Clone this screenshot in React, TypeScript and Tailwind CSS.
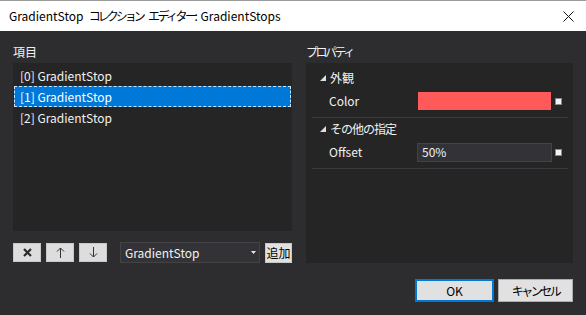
const font = "font-['Noto_Sans_CJK_JP','Noto_Sans',sans-serif]";

function Square() {
  return <div className="ml-[3px] size-[7px] border border-[#8a8a8a] bg-[#f2f2f2]" />;
}

function Category({ label, tight }: { label: string; tight?: boolean }) {
  return (
    <div className="flex h-[22px] items-center">
      <svg className="ml-[8px] size-[6px]" viewBox="0 0 6 6">
        <path d="M6 0 L6 6 L0 6 Z" fill="#e0e0e0" />
      </svg>
      <span className={tight ? "ml-[4px] tracking-[-1px]" : "ml-[4px]"}>{label}</span>
    </div>
  );
}

export default function App() {
  const items = ["[0] GradientStop", "[1] GradientStop", "[2] GradientStop"];
  return (
    <div className={`flex h-[315px] w-[586px] flex-col bg-[#2d2d30] text-[12px] text-[#f1f1f1] ${font}`}>
      <div className="flex h-[31px] items-center border-t border-[#9a9a9a] bg-white pl-[9px] pr-[12px] text-black">
        <span className="flex-1">
          GradientStop&nbsp;&nbsp;
          <span className="tracking-[-3px]">コレクション</span>
          <span className="ml-[5px] tracking-[-2.5px]">エディター</span>: GradientStops
        </span>
        <svg className="size-[11px]" viewBox="0 0 11 11">
          <path d="M0.5 0.5 L10.5 10.5 M10.5 0.5 L0.5 10.5" stroke="#111" strokeWidth="1" />
        </svg>
      </div>

      <div className="flex gap-[14px] px-[13px] pt-[9px]">
        {/* left column */}
        <div className="flex w-[279px] flex-col">
          <div className="flex h-[23px] items-center">項目</div>
          <div className="flex h-[168px] flex-col bg-[#252526] pt-[2px]">
            {items.map((t, i) => (
              <div
                key={t}
                className={
                  i === 1
                    ? "mx-[1px] flex h-[21px] items-center border border-dashed border-[#d0e4f5] bg-[#0078d7] pl-[5px] text-white"
                    : "mx-[1px] flex h-[21px] items-center border border-transparent pl-[5px]"
                }
              >
                {t}
              </div>
            ))}
          </div>
          <div className="mt-[11px] flex h-[21px] items-center">
            <button className="flex h-[19px] w-[28px] items-center justify-center border border-[#c8c8c8] bg-[#dddddd]">
              <svg className="size-[9px]" viewBox="0 0 9 9">
                <path d="M1 1 L8 8 M8 1 L1 8" stroke="#2a2a2a" strokeWidth="2.2" />
              </svg>
            </button>
            <button className="ml-[5px] flex h-[19px] w-[28px] items-center justify-center border border-[#c8c8c8] bg-[#dddddd]">
              <svg className="h-[11px] w-[9px]" viewBox="0 0 9 11">
                <path d="M4.5 1 L4.5 11 M1 4.5 L4.5 1 L8 4.5" stroke="#333" strokeWidth="1" fill="none" />
              </svg>
            </button>
            <button className="ml-[5px] flex h-[19px] w-[28px] items-center justify-center border border-[#c8c8c8] bg-[#dddddd]">
              <svg className="h-[11px] w-[9px]" viewBox="0 0 9 11">
                <path d="M4.5 0 L4.5 10 M1 6.5 L4.5 10 L8 6.5" stroke="#333" strokeWidth="1" fill="none" />
              </svg>
            </button>
            <div className="ml-[13px] flex h-[21px] w-[140px] items-center border border-[#434346] bg-[#333337] pl-[4px] pr-[3px]">
              <span className="flex-1">GradientStop</span>
              <svg className="h-[3px] w-[5px]" viewBox="0 0 5 3">
                <path d="M0 0 L5 0 L2.5 3 Z" fill="#e8e8e8" />
              </svg>
            </div>
            <button className="ml-[5px] flex h-[20px] w-[27px] items-center justify-center border border-[#c8c8c8] bg-[#e1e1e1] text-black">
              追加
            </button>
          </div>
        </div>

        {/* right column */}
        <div className="flex w-[267px] flex-col">
          <div className="flex h-[23px] items-center tracking-[-2.5px]">プロパティ</div>
          <div className="flex h-[200px] flex-col bg-[#252526] pt-[4px]">
            <div className="ml-[6px] mr-[5px] border-b border-[#3a3a3e] pb-[4px]">
              <Category label="外観" />
              <div className="flex h-[24px] items-center">
                <span className="w-[105px] pl-[17px]">Color</span>
                <div className="h-[20px] w-[135px] border border-[#252526] bg-[#ff5a5a]" />
                <Square />
              </div>
            </div>
            <div className="ml-[6px] mr-[5px] border-b border-[#3a3a3e] pb-[4px]">
              <Category label="その他の指定" tight />
              <div className="flex h-[24px] items-center">
                <span className="w-[105px] pl-[17px]">Offset</span>
                <div className="flex h-[19px] w-[135px] items-center border border-[#434346] bg-[#333337] pl-[4px]">
                  50%
                </div>
                <Square />
              </div>
            </div>
          </div>
        </div>
      </div>

      <div className="flex justify-end gap-[4px] px-[13px] pt-[16px]">
        <button className="h-[23px] w-[79px] border-2 border-[#0078d7] bg-[#e1e1e1] text-black">OK</button>
        <button className="h-[23px] w-[75px] border border-[#adadad] bg-[#e1e1e1] text-black">
          <span className="tracking-[-2.5px]">キャンセル</span>
        </button>
      </div>
    </div>
  );
}
